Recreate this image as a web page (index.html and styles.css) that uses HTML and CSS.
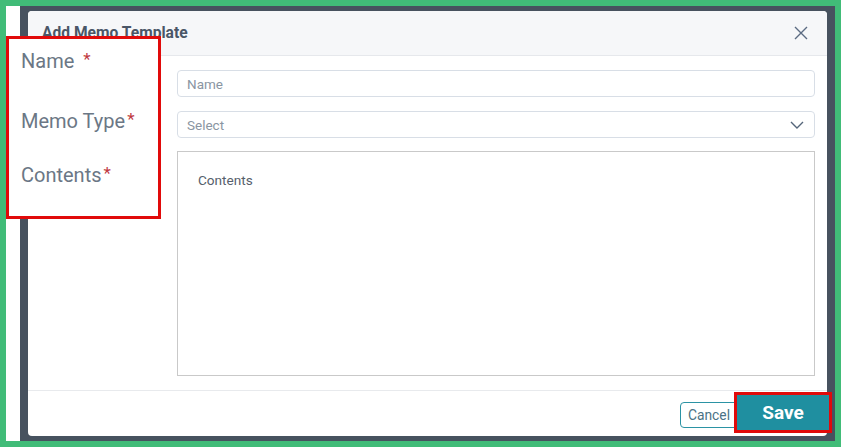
FILE: index.html
```html
<!DOCTYPE html>
<html lang="en">
<head>
<meta charset="utf-8">
<title>Add Memo Template</title>
<link rel="stylesheet" href="styles.css">
</head>
<body>
<div class="frame">
  <div class="screen">
    <div class="strip"></div>
    <div class="backdrop">
      <div class="modal">
        <div class="modal-header">
          <span class="modal-title">Add Memo Template</span>
          <button class="close" aria-label="Close">
            <svg width="14" height="14" viewBox="0 0 14 14"><path d="M1 1L13 13M13 1L1 13" stroke="#5b6b82" stroke-width="1.4" fill="none"/></svg>
          </button>
        </div>
        <div class="modal-body">
          <div class="row">
            <div class="label"></div>
            <div class="input"><span class="ph">Name</span></div>
          </div>
          <div class="row">
            <div class="label"></div>
            <div class="input select"><span class="ph">Select</span>
              <svg width="14" height="8" viewBox="0 0 14 8"><path d="M1 1L7 7L13 1" stroke="#55657a" stroke-width="1.4" fill="none"/></svg>
            </div>
          </div>
          <div class="row grow">
            <div class="label"></div>
            <div class="textarea"><span class="ta-text">Contents</span></div>
          </div>
        </div>
        <div class="modal-footer">
          <button class="btn-cancel">Cancel</button>
          <div class="save-slot"></div>
        </div>
      </div>
    </div>
  </div>
  <div class="callout labels">
    <div class="big-label l-name">Name<span class="req gap">*</span></div>
    <div class="big-label l-type">Memo Type<span class="req">*</span></div>
    <div class="big-label l-contents">Contents<span class="req">*</span></div>
  </div>
  <div class="callout save"><span>Save</span></div>
</div>
</body>
</html>
```
FILE: styles.css
```css
* { box-sizing: border-box; }
html, body { margin: 0; padding: 0; }
body {
  width: 841px;
  height: 447px;
  overflow: hidden;
  font-family: Roboto, "Liberation Sans", sans-serif;
  background: #41bc78;
}
.frame {
  position: relative;
  width: 841px;
  height: 447px;
  padding: 6px;
  background: #41bc78;
}
.screen {
  display: flex;
  height: 100%;
}
.strip {
  width: 14px;
  background: #ffffff;
}
.backdrop {
  flex: 1;
  background: #47525f;
  padding: 5px 8px 5px 8px;
  display: flex;
}
.modal {
  flex: 1;
  background: #ffffff;
  border-radius: 4px;
  display: flex;
  flex-direction: column;
  overflow: hidden;
}
.modal-header {
  height: 45px;
  background: #f6f7f9;
  border-bottom: 1px solid #e6e8ec;
  display: flex;
  align-items: center;
  justify-content: space-between;
  padding: 0 19px 0 14px;
}
.modal-title {
  font-size: 15.6px;
  font-weight: 700;
  color: #4a5667;
}
.close {
  border: 0;
  background: none;
  padding: 0;
  width: 14px;
  height: 14px;
  display: flex;
}
.modal-body {
  flex: 1;
  padding: 14px 12px 14px 14px;
  display: flex;
  flex-direction: column;
  gap: 14px;
}
.row {
  display: flex;
}
.row.grow { flex: 1; margin-top: -1px; }
.label {
  width: 135px;
}
.input {
  flex: 1;
  height: 27px;
  border: 1px solid #d8dee6;
  border-radius: 4px;
  display: flex;
  align-items: center;
  padding: 0 10px 0 9px;
  font-size: 13.5px;
}
.ph { color: #8a95a2; }
.select { justify-content: space-between; }
.textarea {
  flex: 1;
  border: 1px solid #c9c9c9;
  padding: 20px 20px;
  font-size: 13.6px;
  color: #56606c;
}
.modal-footer {
  height: 46px;
  border-top: 1px solid #e8eaed;
  display: flex;
  align-items: center;
  justify-content: flex-end;
}
.btn-cancel {
  height: 26px;
  width: 58px;
  border: 1px solid #2b93a4;
  border-radius: 4px;
  background: #ffffff;
  color: #4a7285;
  font-family: Roboto, "Liberation Sans", sans-serif;
  font-size: 13.8px;
  padding: 0;
  margin-top: 2px;
}
.save-slot { width: 89px; }
.callout {
  position: absolute;
  border: 3px solid #e10a0a;
  background: #ffffff;
}
.labels {
  left: 6px;
  top: 36px;
  width: 155px;
  height: 183px;
  padding: 11px 0 0 12px;
  display: flex;
  flex-direction: column;
}
.big-label {
  font-size: 20px;
  line-height: 23px;
  height: 23px;
  color: #6b7785;
}
.l-type { margin-top: 37px; }
.l-contents { margin-top: 31px; }
.req {
  color: #c0393f;
  font-size: 17px;
  line-height: 0;
  vertical-align: 3px;
  margin-left: 2px;
}
.req.gap { margin-left: 9px; }
.save {
  left: 734px;
  top: 392px;
  width: 98px;
  height: 41px;
  background: #1f8fa0;
  display: flex;
  align-items: center;
  justify-content: center;
  color: #ffffff;
  font-size: 19px;
  font-weight: 700;
}
```
